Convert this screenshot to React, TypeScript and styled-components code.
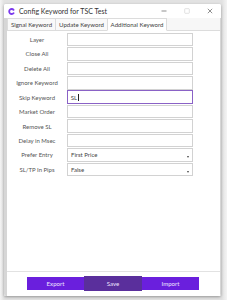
import React from "react";
import styled, { createGlobalStyle } from "styled-components";

const Global = createGlobalStyle`
  html, body { margin: 0; padding: 0; }
  body {
    background: #ececec;
    font-family: Lato, "Noto Sans", sans-serif;
    width: 227px;
    height: 300px;
    overflow: hidden;
  }
`;

const Page = styled.div`
  width: 227px;
  height: 300px;
  box-sizing: border-box;
  padding: 4px 6px 4px 4px;
  background: linear-gradient(90deg, #f4f4f4 0px, #e2e2e2 4px, #e2e2e2 222px, #f4f4f4 227px);
`;

const Window = styled.div`
  width: 217px;
  height: 292px;
  display: flex;
  flex-direction: column;
  background: #fff;
  box-shadow: 0 1px 3px rgba(0, 0, 0, 0.35);
  border-radius: 2px;
  overflow: hidden;
`;

const TitleBar = styled.div`
  height: 14px;
  display: flex;
  align-items: center;
  padding-left: 4px;
  background: #fff;
  color: #333;
  font-size: 7px;
`;

const TitleText = styled.span`
  margin-left: 4px;
  flex: 1;
  white-space: nowrap;
`;

const Ctrl = styled.div`
  width: 23px;
  height: 14px;
  display: flex;
  align-items: center;
  justify-content: center;
`;

const Frame = styled.div`
  flex: 1;
  display: flex;
  flex-direction: column;
  border-left: 3px solid #d6d6d6;
  border-right: 1px solid #d6d6d6;
  background: #fff;
`;

const TabRow = styled.div`
  height: 13px;
  display: flex;
  align-items: flex-end;
  background: #f7f7f7;
  border-bottom: 1px solid #dcdcdc;
  box-sizing: border-box;
`;

const Tab = styled.div<{ $active?: boolean; $w: number }>`
  width: ${(p) => p.$w}px;
  height: ${(p) => (p.$active ? 13 : 12)}px;
  box-sizing: border-box;
  display: flex;
  align-items: center;
  justify-content: center;
  font-size: 6.1px;
  color: #444;
  white-space: nowrap;
  background: ${(p) => (p.$active ? "#fff" : "#f9f9f9")};
  border: 1px solid #dcdcdc;
  border-bottom: ${(p) => (p.$active ? "1px solid #fff" : "none")};
  margin-bottom: ${(p) => (p.$active ? "-1px" : "0")};
  margin-right: -1px;
`;

const TabPage = styled.div`
  height: 240px;
  box-sizing: border-box;
  padding-top: 1.7px;
  background: #fff;
`;

const Form = styled.div`
  display: grid;
  grid-template-columns: 60px 126px;
  grid-auto-rows: 13.5px;
  row-gap: 0.95px;
`;

const Label = styled.div`
  display: flex;
  align-items: center;
  justify-content: center;
  font-size: 6px;
  color: #555;
  white-space: nowrap;
`;

const Field = styled.div<{ $focus?: boolean }>`
  position: relative;
  box-sizing: border-box;
  border: ${(p) => (p.$focus ? "1.3px solid #8a62c6" : "1px solid #d2d2d2")};
  background: #fff;
  display: flex;
  align-items: center;
  padding-left: ${(p) => (p.$focus ? 2.7 : 3)}px;
  font-size: 6px;
  color: #444;
`;

const Caret = styled.span`
  display: inline-block;
  width: 0.8px;
  height: 7px;
  background: #222;
  margin-left: 0.5px;
`;

const Arrow = styled.span`
  position: absolute;
  right: 3px;
  bottom: 2.5px;
  width: 0;
  height: 0;
  border-left: 1.8px solid transparent;
  border-right: 1.8px solid transparent;
  border-top: 2px solid #444;
`;

const BottomBar = styled.div`
  flex: 1;
  box-sizing: border-box;
  border-top: 1px solid #e2e2e2;
  display: flex;
  justify-content: center;
  align-items: flex-start;
  padding-top: 5px;
  padding-right: 1px;
  background: #fff;
`;

const Btn = styled.div<{ $dark?: boolean }>`
  width: 57.5px;
  height: ${(p) => (p.$dark ? 15 : 13)}px;
  margin-top: ${(p) => (p.$dark ? -1 : 0)}px;
  display: flex;
  align-items: center;
  justify-content: center;
  background: ${(p) => (p.$dark ? "#5a2f9c" : "#6a1fdd")};
  color: #ece4ff;
  font-size: 6.1px;
`;

const fields: { label: string; value?: string; focus?: boolean; select?: boolean }[] = [
  { label: "Layer" },
  { label: "Close All" },
  { label: "Delete All" },
  { label: "Ignore Keyword" },
  { label: "Skip Keyword", value: "SL", focus: true },
  { label: "Market Order" },
  { label: "Remove SL" },
  { label: "Delay in Msec" },
  { label: "Prefer Entry", value: "First Price", select: true },
  { label: "SL/TP In Pips", value: "False", select: true },
];

export default function App() {
  return (
    <>
      <Global />
      <Page>
        <Window>
          <TitleBar>
            <svg width="7" height="7" viewBox="0 0 10 10">
              <path d="M8 2.6 A3.6 3.6 0 1 0 8 7.4" fill="none" stroke="#7c3aed" strokeWidth="2.6" strokeLinecap="round" />
            </svg>
            <TitleText>Config Keyword for TSC Test</TitleText>
            <Ctrl>
              <svg width="6" height="6" viewBox="0 0 6 6">
                <line x1="0.5" y1="3" x2="5.5" y2="3" stroke="#444" strokeWidth="0.6" />
              </svg>
            </Ctrl>
            <Ctrl>
              <svg width="6" height="6" viewBox="0 0 6 6">
                <rect x="0.7" y="0.7" width="4.6" height="4.6" rx="0.6" fill="none" stroke="#cfcfcf" strokeWidth="0.6" />
              </svg>
            </Ctrl>
            <Ctrl>
              <svg width="6" height="6" viewBox="0 0 6 6">
                <path d="M0.8 0.8 L5.2 5.2 M5.2 0.8 L0.8 5.2" stroke="#444" strokeWidth="0.6" />
              </svg>
            </Ctrl>
          </TitleBar>
          <Frame>
            <TabRow>
              <Tab $w={49}>Signal Keyword</Tab>
              <Tab $w={53}>Update Keyword</Tab>
              <Tab $w={60} $active>Additional Keyword</Tab>
            </TabRow>
            <TabPage>
              <Form>
                {fields.map((f) => (
                  <React.Fragment key={f.label}>
                    <Label>{f.label}</Label>
                    <Field $focus={f.focus}>
                      {f.value}
                      {f.focus && <Caret />}
                      {f.select && <Arrow />}
                    </Field>
                  </React.Fragment>
                ))}
              </Form>
            </TabPage>
            <BottomBar>
              <Btn>Export</Btn>
              <Btn $dark>Save</Btn>
              <Btn>Import</Btn>
            </BottomBar>
          </Frame>
        </Window>
      </Page>
    </>
  );
}
